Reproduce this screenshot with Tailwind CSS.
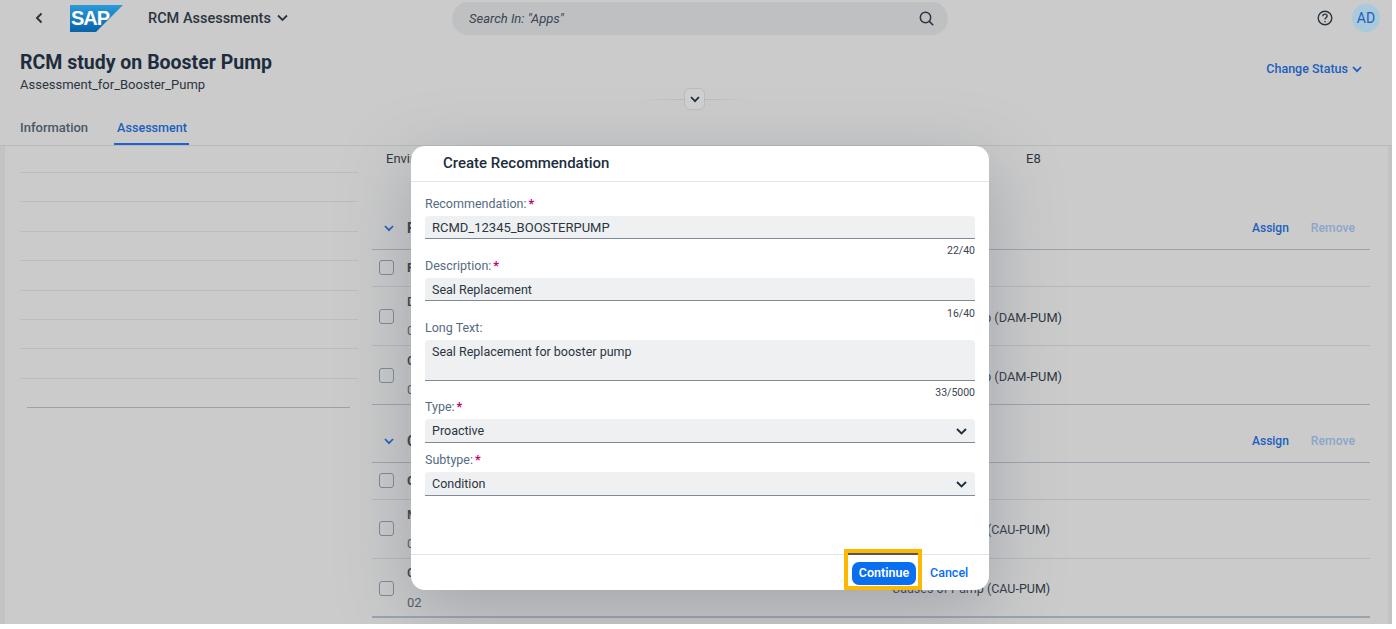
<!DOCTYPE html>
<html lang="en">
<head>
  <meta charset="UTF-8" />
  <title>RCM Assessments</title>
  <script src="https://cdn.jsdelivr.net/npm/@tailwindcss/browser@4"></script>
</head>
<body class="bg-white overflow-hidden font-['Roboto',sans-serif] text-[13px] text-[#2b3540]">

  <div class="relative w-[1392px] h-[624px] bg-[#cbcbcb] overflow-hidden">

    <!-- shell bar -->
    <header class="h-[36px] flex items-center relative">
      <svg class="ml-[34px] w-[10px] h-[12px]" viewBox="0 0 10 12" fill="none" stroke="#2b3540" stroke-width="2"><path d="M7.5 1.5 3 6l4.5 4.5"/></svg>
      <div class="relative ml-[26px] w-[53px] h-[27px]">
        <svg class="w-full h-full" viewBox="0 0 53 27">
          <defs><linearGradient id="sapg" x1="0" y1="0" x2="0" y2="1"><stop offset="0" stop-color="#2a9bd8"/><stop offset="1" stop-color="#0a62a8"/></linearGradient></defs>
          <polygon points="0,0 53,0 26,27 0,27" fill="url(#sapg)"/>
        </svg>
        <span class="absolute left-[1px] top-[2px] text-[20px] leading-[22px] font-bold text-white tracking-[-1px] font-['Liberation_Sans',sans-serif]">SAP</span>
      </div>
      <div class="ml-[25px] mt-[1px] text-[14.5px] font-medium text-[#2b3540]">RCM Assessments</div>
      <svg class="ml-[6px] w-[11px] h-[8px]" viewBox="0 0 11 8" fill="none" stroke="#2b3540" stroke-width="1.8"><path d="M1 1.5 5.5 6 10 1.5"/></svg>
      <div class="absolute left-[452px] top-[2px] w-[496px] h-[33px] rounded-full bg-[#bfc0c2] flex items-center justify-between pl-[17px] pr-[14px]">
        <span class="italic text-[13px] text-[#3a4552]">Search In: "Apps"</span>
        <svg class="w-[15px] h-[15px]" viewBox="0 0 15 15" fill="none" stroke="#2b3540" stroke-width="1.5"><circle cx="6.5" cy="6.5" r="5.2"/><path d="m10.4 10.4 3.8 3.8"/></svg>
      </div>
      <div class="ml-auto flex items-center">
        <svg class="w-[16px] h-[16px]" viewBox="0 0 16 16" fill="none" stroke="#2b3540" stroke-width="1.4"><circle cx="8" cy="8" r="6.8"/><path d="M5.9 6.2c0-1.3 1-2.1 2.1-2.1s2.1.8 2.1 1.9c0 1.7-2.1 1.7-2.1 3.4"/><path d="M8 11v1.2"/></svg>
        <div class="ml-[19px] mr-[12px] w-[28px] h-[28px] rounded-full bg-[#a9c9dc] flex items-center justify-center text-[14px] text-[#1b5fbe]">AD</div>
      </div>
    </header>

    <!-- object header -->
    <section class="relative h-[110px] border-b border-[#b9b9b9]">
      <div class="flex justify-between pl-[20px] pr-[30px] pt-[14px]">
        <div>
          <h1 class="text-[19.5px] leading-[26px] font-bold text-[#1d2d3e]">RCM study on Booster Pump</h1>
          <p class="text-[13px] leading-[18px] text-[#2b3540]">Assessment_for_Booster_Pump</p>
        </div>
        <div class="flex items-center gap-[4px] h-[20px] mt-[9px] text-[#1b5fbe] text-[12.5px] font-medium">
          Change Status
          <svg class="w-[10px] h-[7px]" viewBox="0 0 10 7" fill="none" stroke="#1b5fbe" stroke-width="1.8"><path d="M1 1 5 5.2 9 1"/></svg>
        </div>
      </div>
      <div class="absolute left-[640px] top-[63px] w-[110px] h-px bg-gradient-to-r from-[#cbcbcb] via-[#b5b5b5] to-[#cbcbcb]"></div>
      <div class="absolute left-[684px] top-[52px] w-[21px] h-[22px] rounded-[6px] bg-[#d0d0d0] border border-[#bcbcc0] flex items-center justify-center">
        <svg class="w-[10px] h-[7px]" viewBox="0 0 10 7" fill="none" stroke="#1d2d3e" stroke-width="1.8"><path d="M1 1 5 5.2 9 1"/></svg>
      </div>
      <nav class="absolute left-[20px] bottom-0 flex text-[13px] font-medium">
        <div class="h-[36px] pt-[9px] text-[#4a5866]">Information</div>
        <div class="ml-[26px] h-[36px] w-[75px] pl-[3px] pt-[10px] text-[12.6px] text-[#1b5fbe] border-b-[2px] border-[#1b63d0]">Assessment</div>
      </nav>
    </section>

    <!-- page content -->
    <main class="flex h-[478px] border-x-[5px] border-[#c3c3c3] border-r-[4px]">
      <aside class="w-[367px] shrink-0 pl-[15px] pt-[26px]">
        <div class="w-[338px] h-[29.4px] border-t border-[#bdbdbd]"></div>
        <div class="w-[338px] h-[29.4px] border-t border-[#bdbdbd]"></div>
        <div class="w-[338px] h-[29.4px] border-t border-[#bdbdbd]"></div>
        <div class="w-[338px] h-[29.4px] border-t border-[#bdbdbd]"></div>
        <div class="w-[338px] h-[29.4px] border-t border-[#bdbdbd]"></div>
        <div class="w-[338px] h-[29.4px] border-t border-[#bdbdbd]"></div>
        <div class="w-[338px] h-[29.4px] border-t border-[#bdbdbd]"></div>
        <div class="w-[338px] h-[29.4px] border-t border-[#bdbdbd]"></div>
        <div class="ml-[7px] w-[323px] border-t border-[#9aa3ad]"></div>
      </aside>

      <div class="w-[998px] shrink-0">
        <div class="flex h-[59px] pt-[3px] pl-[14px]">
          <div class="w-[640px]">Environment</div>
          <div>E8</div>
        </div>

        <div class="h-[45px] flex items-center border-b border-[#9aa3ad] pl-[12px] pr-[15px] pt-[2px]">
          <svg class="w-[10px] h-[7px]" viewBox="0 0 10 7" fill="none" stroke="#1b5fbe" stroke-width="1.8"><path d="M1 1 5 5.2 9 1"/></svg>
          <span class="ml-[13px] text-[14px] font-bold">Failure Modes</span>
          <span class="ml-auto text-[12px] font-medium text-[#1b5fbe]">Assign</span>
          <span class="ml-[22px] text-[12.2px] font-medium text-[#8ba6ca]">Remove</span>
        </div>
        <div class="h-[37px] flex items-center border-b border-[#b5b8bc] pl-[7px]">
          <div class="w-[15px] h-[15px] -mt-[1px] rounded-[3px] border border-[#7b8794]"></div>
          <span class="ml-[13px] font-bold">Failure Mode</span>
        </div>
        <div class="relative h-[59px] flex items-center border-b border-[#b5b8bc] pl-[7px]">
          <div class="w-[15px] h-[15px] rounded-[3px] border border-[#7b8794]"></div>
          <div class="ml-[13px]"><div class="font-medium">Damage</div><div class="mt-[10px] text-[#4a5866]">01</div></div>
          <span class="absolute left-[520px] top-[21px] text-[12.8px]">Damage of Pump (DAM-PUM)</span>
        </div>
        <div class="relative h-[59px] flex items-center border-b border-[#9aa3ad] pl-[7px]">
          <div class="w-[15px] h-[15px] rounded-[3px] border border-[#7b8794]"></div>
          <div class="ml-[13px]"><div class="font-medium">Crack</div><div class="mt-[10px] text-[#4a5866]">02</div></div>
          <span class="absolute left-[520px] top-[21px] text-[12.8px]">Damage of Pump (DAM-PUM)</span>
        </div>

        <div class="h-[58px] flex items-center border-b border-[#9aa3ad] pl-[12px] pr-[15px] pt-[15px]">
          <svg class="w-[10px] h-[7px]" viewBox="0 0 10 7" fill="none" stroke="#1b5fbe" stroke-width="1.8"><path d="M1 1 5 5.2 9 1"/></svg>
          <span class="ml-[13px] text-[14px] font-bold">Causes</span>
          <span class="ml-auto text-[12px] font-medium text-[#1b5fbe]">Assign</span>
          <span class="ml-[22px] text-[12.2px] font-medium text-[#8ba6ca]">Remove</span>
        </div>
        <div class="h-[37px] flex items-center border-b border-[#b5b8bc] pl-[7px]">
          <div class="w-[15px] h-[15px] -mt-[1px] rounded-[3px] border border-[#7b8794]"></div>
          <span class="ml-[13px] font-bold">Cause</span>
        </div>
        <div class="relative h-[59px] flex items-center border-b border-[#b5b8bc] pl-[7px]">
          <div class="w-[15px] h-[15px] -mt-[1px] rounded-[3px] border border-[#7b8794]"></div>
          <div class="ml-[13px]"><div class="font-medium">Mechanical</div><div class="mt-[10px] text-[#4a5866]">01</div></div>
          <span class="absolute left-[520px] top-[21px] text-[12.5px]">Causes of Pump (CAU-PUM)</span>
        </div>
        <div class="relative h-[59px] flex items-center border-b-[2px] border-[#9aa3ad] pl-[7px]">
          <div class="w-[15px] h-[15px] mt-[1px] rounded-[3px] border border-[#7b8794]"></div>
          <div class="ml-[13px]"><div class="font-medium">Corrosion</div><div class="mt-[10px] text-[#4a5866]">02</div></div>
          <span class="absolute left-[520px] top-[21px] text-[12.5px]">Causes of Pump (CAU-PUM)</span>
        </div>
      </div>
    </main>

    <!-- dialog -->
    <div class="absolute left-[411px] top-[146px] w-[578px] h-[444px] bg-white rounded-[14px] shadow-[0_20px_70px_rgba(110,120,135,0.45)] flex flex-col">
      <div class="h-[36px] shrink-0 border-b border-[#e4e4e4] pl-[32px] flex items-center text-[15px] font-medium text-[#1d2d3e]">Create Recommendation</div>

      <div class="flex-1 px-[14px] pt-[13px]">
        <label class="block h-[21px] leading-[17px] text-[12.5px] text-[#556b82]">Recommendation:<span class="text-[#c0006f] font-bold ml-[2px]">*</span></label>
        <div class="h-[23px] rounded-t-[4px] bg-[#eff0f2] border-b border-[#7d8a99] px-[7px] leading-[24px] text-[13px]">RCMD_12345_BOOSTERPUMP</div>
        <div class="h-[19px] pt-[4px] text-right text-[10.5px] text-[#3a4552]">22/40</div>

        <label class="block h-[20px] leading-[15px] text-[12.5px] text-[#556b82]">Description:<span class="text-[#c0006f] font-bold ml-[2px]">*</span></label>
        <div class="h-[23px] rounded-t-[4px] bg-[#eff0f2] border-b border-[#7d8a99] px-[7px] leading-[24px] text-[12.5px]">Seal Replacement</div>
        <div class="h-[19px] pt-[5px] text-right text-[10.5px] text-[#3a4552]">16/40</div>

        <label class="block h-[20px] leading-[16px] text-[12.5px] text-[#556b82]">Long Text:</label>
        <div class="h-[41px] rounded-t-[4px] bg-[#eff0f2] border-b border-[#7d8a99] px-[7px] leading-[23px] text-[12.5px]">Seal Replacement for booster pump</div>
        <div class="h-[19px] pt-[4px] text-right text-[10.5px] text-[#3a4552]">33/5000</div>

        <label class="block h-[19px] leading-[16px] text-[12.5px] text-[#556b82] -mt-[1px]">Type:<span class="text-[#c0006f] font-bold ml-[2px]">*</span></label>
        <div class="h-[24px] mt-[1px] pt-[2px] rounded-t-[4px] bg-[#eff0f2] border-b border-[#7d8a99] pl-[7px] pr-[8px] flex items-center justify-between text-[12.5px]">
          Proactive
          <svg class="w-[11px] h-[7px]" viewBox="0 0 11 7" fill="none" stroke="#1d2d3e" stroke-width="1.8"><path d="M1 1l4.5 4.5L10 1"/></svg>
        </div>

        <label class="block h-[19px] leading-[16px] mt-[9px] text-[12.5px] text-[#556b82]">Subtype:<span class="text-[#c0006f] font-bold ml-[2px]">*</span></label>
        <div class="h-[24px] mt-[1px] pt-[2px] rounded-t-[4px] bg-[#eff0f2] border-b border-[#7d8a99] pl-[7px] pr-[8px] flex items-center justify-between text-[12.5px]">
          Condition
          <svg class="w-[11px] h-[7px]" viewBox="0 0 11 7" fill="none" stroke="#1d2d3e" stroke-width="1.8"><path d="M1 1l4.5 4.5L10 1"/></svg>
        </div>
      </div>

      <footer class="h-[36px] shrink-0 border-t border-[#e4e4e4] flex items-center justify-end pr-[21px] pt-[1px]">
        <button class="w-[64px] h-[23px] rounded-[7px] bg-[#0a6ef0] text-white text-[12.5px] font-semibold">Continue</button>
        <span class="ml-[14px] w-[38px] text-[12.5px] font-medium text-[#0a6ef0]">Cancel</span>
      </footer>

      <!-- tutorial highlight -->
      <div class="absolute left-[433px] top-[403px] w-[78px] h-[41px] border-[4px] border-[#fcb900] shadow-[inset_0_2px_0_#555]"></div>
    </div>
  </div>

</body>
</html>
